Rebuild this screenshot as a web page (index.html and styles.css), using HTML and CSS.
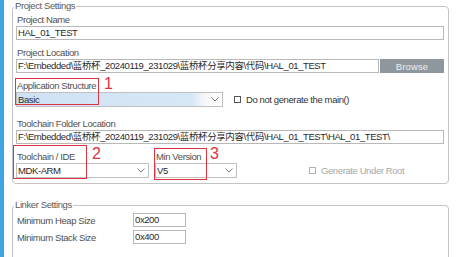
FILE: index.html
```html
<!DOCTYPE html>
<html lang="en">
<head>
  <meta charset="UTF-8">
  <title>Project Manager</title>
  <link rel="stylesheet" href="styles.css">
</head>
<body>
  <div class="app">
    <!-- blue strip of the side panel -->
    <div class="sidebar"></div>

    <div class="content">
      <fieldset class="group">
        <legend>Project Settings</legend>

        <div class="field first">
          <label>Project Name</label>
          <div class="input">HAL_01_TEST</div>
        </div>

        <div class="field">
          <label>Project Location</label>
          <div class="browse-row">
            <div class="input grow">F:\Embedded\蓝桥杯_20240119_231029\蓝桥杯分享内容\代码\HAL_01_TEST</div>
            <button class="browse">Browse</button>
          </div>
        </div>

        <div class="field">
          <label>Application Structure</label>
          <div class="struct-row">
            <div class="select basic">
              <span>Basic</span>
              <svg class="chevron" width="8" height="5" viewBox="0 0 8 5"><polyline points="0.5,0.5 4,4 7.5,0.5" fill="none" stroke="#777" stroke-width="1"/></svg>
            </div>
            <span class="check"></span>
            <span class="check-text">Do not generate the main()</span>
          </div>
        </div>

        <div class="field gap">
          <label>Toolchain Folder Location</label>
          <div class="input">F:\Embedded\蓝桥杯_20240119_231029\蓝桥杯分享内容\代码\HAL_01_TEST\HAL_01_TEST\</div>
        </div>

        <div class="tool-row">
          <div class="field col-ide">
            <label>Toolchain / IDE</label>
            <div class="select">
              <span>MDK-ARM</span>
              <svg class="chevron" width="8" height="5" viewBox="0 0 8 5"><polyline points="0.5,0.5 4,4 7.5,0.5" fill="none" stroke="#777" stroke-width="1"/></svg>
            </div>
          </div>
          <div class="field col-ver">
            <label>Min Version</label>
            <div class="select">
              <span>V5</span>
              <svg class="chevron" width="8" height="5" viewBox="0 0 8 5"><polyline points="0.5,0.5 4,4 7.5,0.5" fill="none" stroke="#777" stroke-width="1"/></svg>
            </div>
          </div>
          <div class="root-check">
            <span class="check disabled"></span>
            <span class="check-text disabled">Generate Under Root</span>
          </div>
        </div>
      </fieldset>

      <fieldset class="group linker">
        <legend>Linker Settings</legend>
        <div class="linker-row">
          <label>Minimum Heap Size</label>
          <div class="input small">0x200</div>
        </div>
        <div class="linker-row">
          <label>Minimum Stack Size</label>
          <div class="input small">0x400</div>
        </div>
      </fieldset>

      <!-- red annotations drawn over the form -->
      <div class="mark mark-1"></div><span class="num num-1">1</span>
      <div class="mark mark-2"></div><span class="num num-2">2</span>
      <div class="mark mark-3"></div><span class="num num-3">3</span>
    </div>
  </div>
</body>
</html>
```

FILE: styles.css
```css
* {
  box-sizing: border-box;
}

body {
  margin: 0;
  background: #fff;
  font-family: "Liberation Sans", "Noto Sans CJK SC", sans-serif;
  font-size: 9.5px;
  letter-spacing: -0.4px;
  color: #505050;
  overflow: hidden;
}

.app {
  display: flex;
  height: 257px;
  overflow: hidden;
}

.sidebar {
  width: 4px;
  background: #3fa5e2;
}

.content {
  position: relative;
  padding-left: 8px;
  width: 445px;
}

/* Group boxes */
.group {
  margin: 0;
  padding: 1px 4px 5px 3px;
  border: 1px solid #c4c4c4;
  border-radius: 4px;
}

.group legend {
  padding: 0 1px;
  margin-left: -2px;
  line-height: 12px;
  color: #5a5a5a;
}

.linker {
  margin-top: 15px;
  height: 66px;
  padding-top: 1px;
}

/* Fields */
.field {
  margin-top: 7px;
}

.field.first {
  margin-top: 1px;
}

.field.gap {
  margin-top: 11px;
}

.field label {
  display: block;
  height: 12px;
  line-height: 12px;
  padding-left: 1px;
}

.input {
  height: 14px;
  line-height: 12px;
  padding: 0 1px;
  border: 1px solid #b8b8b8;
  color: #2a2a2a;
  white-space: nowrap;
  overflow: hidden;
}

.browse-row {
  display: flex;
}

.grow {
  flex: 1;
}

.browse {
  width: 64px;
  height: 14px;
  margin-left: 1px;
  padding: 0;
  border: none;
  background: #8f979e;
  color: #eef0f2;
  font-family: inherit;
  font-size: 9.5px;
  letter-spacing: 0.1px;
}

/* Drop downs */
.select {
  display: flex;
  align-items: center;
  justify-content: space-between;
  height: 15px;
  padding: 0 3px 0 1px;
  border: 1px solid #c0c0c0;
  color: #2a2a2a;
}

.select.basic {
  width: 207px;
  background: linear-gradient(to right, #cfe2f4 0%, #d6e7f6 85%, #f3f6f9 91%, #fff 100%);
}

.struct-row {
  display: flex;
  align-items: center;
}

.check {
  width: 7px;
  height: 7px;
  border: 1px solid #555;
  margin-left: 11px;
}

.check-text {
  margin-left: 5px;
  color: #333;
}

.check.disabled {
  border-color: #b0b0b0;
}

.check-text.disabled {
  color: #a8a8a8;
}

.tool-row {
  display: flex;
  align-items: flex-end;
}

.col-ide {
  width: 133px;
}

.col-ver {
  width: 82px;
  margin-left: 6px;
}

.root-check {
  display: flex;
  align-items: center;
  margin-left: 61px;
  margin-bottom: 2px;
}

/* Linker rows */
.linker-row {
  display: flex;
  align-items: center;
  margin-top: 3px;
}

.linker-row:first-of-type {
  margin-top: 1px;
}

.linker-row label {
  width: 117px;
  padding-left: 1px;
}

.input.small {
  width: 53px;
}

/* Red annotation boxes */
.mark {
  position: absolute;
  border: 1.5px solid #dc3441;
}

.mark-1 {
  left: 11px;
  top: 78px;
  width: 84px;
  height: 27px;
}

.mark-2 {
  left: 9px;
  top: 145px;
  width: 74px;
  height: 34px;
}

.mark-3 {
  left: 150px;
  top: 148px;
  width: 53px;
  height: 32px;
}

.num {
  position: absolute;
  font-family: "Liberation Sans", sans-serif;
  font-size: 16px;
  line-height: 16px;
  letter-spacing: 0;
  color: #e0313c;
}

.num-1 {
  left: 100px;
  top: 76px;
}

.num-2 {
  left: 88px;
  top: 146px;
}

.num-3 {
  left: 206px;
  top: 146px;
}
```
